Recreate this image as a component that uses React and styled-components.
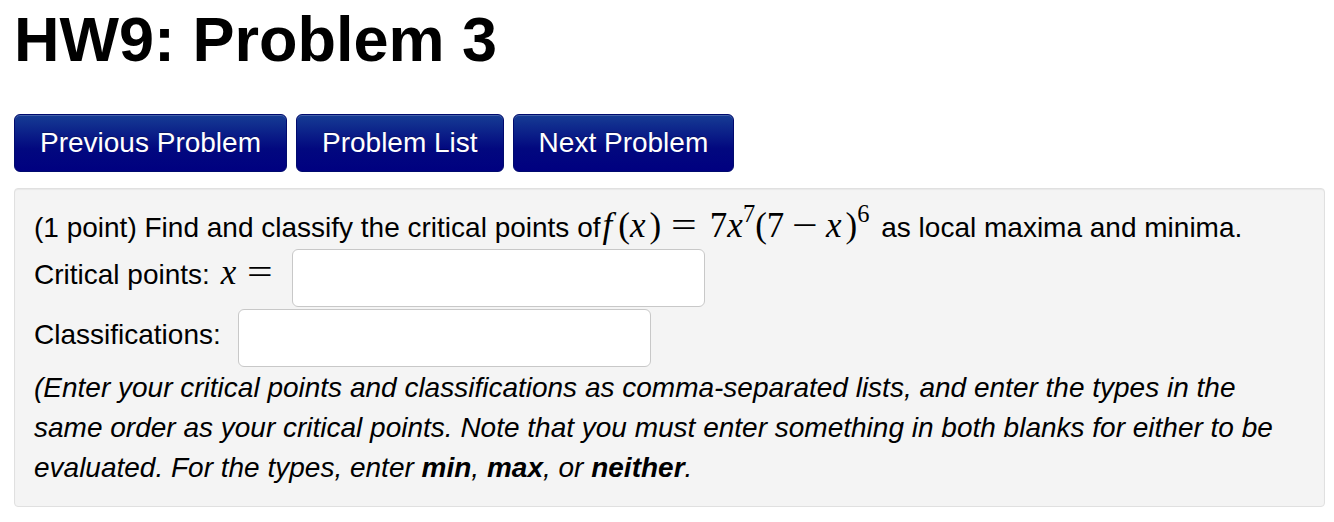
import React from "react";
import styled, { createGlobalStyle } from "styled-components";

const GlobalStyle = createGlobalStyle`
  body {
    margin: 0;
    background: #fff;
    color: #000;
    font-family: "Liberation Sans", Arial, Helvetica, sans-serif;
  }
`;

const Page = styled.div`
  padding: 4px 9px 0 14px;
`;

const Title = styled.h1`
  margin: 0;
  font-size: 63px;
  line-height: 70px;
  font-weight: bold;
`;

const ButtonBar = styled.div`
  display: flex;
  gap: 9px;
  margin-top: 40px;
`;

const NavButton = styled.button`
  height: 58px;
  padding: 0 25px;
  border: 1px solid #000a6e;
  border-radius: 6px;
  background: linear-gradient(#163c94, #02087f 60%, #000080);
  box-shadow: inset 0 1px 0 rgba(255, 255, 255, 0.2);
  color: #fff;
  font-family: inherit;
  font-size: 28px;
  text-shadow: 0 -1px 0 rgba(0, 0, 0, 0.25);
  cursor: pointer;
`;

const Panel = styled.div`
  margin-top: 16px;
  padding: 19px 19px 18px;
  background: #f4f4f4;
  border: 1px solid #e0e0e0;
  border-radius: 4px;
  box-shadow: inset 0 1px 1px rgba(0, 0, 0, 0.05);
  font-size: 28px;
  line-height: 40px;
`;

const Line = styled.div`
  white-space: nowrap;
`;

const FieldRow = styled.div`
  display: flex;
  align-items: center;
  height: 60px;
`;

const Label = styled.span`
  white-space: pre;
  margin-bottom: 6px;
`;

const AnswerInput = styled.input`
  box-sizing: border-box;
  width: 413px;
  height: 58px;
  margin-left: ${(p) => p.$gap}px;
  padding: 4px 10px;
  border: 1px solid #c8c8c8;
  border-radius: 6px;
  background: #fff;
  font-size: 28px;
  font-family: inherit;
  outline: none;
`;

const Note = styled.div`
  font-style: italic;
`;

const Math = styled.span`
  font-family: "Liberation Serif", "Times New Roman", serif;
  font-size: 35px;
  line-height: 1;
  white-space: nowrap;
  margin: 0 ${(p) => p.$right || 0}px 0 ${(p) => p.$left || 0}px;
`;

const Mi = styled.span`
  font-style: italic;
  margin-right: ${(p) => p.$mr || 0}px;
`;

const Mo = styled.span`
  display: inline-block;
  margin: 0 ${(p) => p.$r}px 0 ${(p) => p.$l}px;
  transform: scaleX(1.3);
`;

const Sup = styled.span`
  font-size: 70%;
  line-height: 0;
  vertical-align: 0.62em;
`;

export default function App() {
  return (
    <>
      <GlobalStyle />
      <Page>
        <Title>HW9: Problem 3</Title>
        <ButtonBar>
          <NavButton>Previous Problem</NavButton>
          <NavButton>Problem List</NavButton>
          <NavButton>Next Problem</NavButton>
        </ButtonBar>
        <Panel>
          <Line>
            (1 point) Find and classify the critical points of
            <Math $left={2} $right={4}>
              <Mi $mr={6}>f</Mi>(<Mi $mr={4}>x</Mi>)
              <Mo $l={13} $r={16}>=</Mo>7<Mi>x</Mi>
              <Sup>7</Sup>(7<Mo $l={11} $r={11}>−</Mo>
              <Mi $mr={4}>x</Mi>)<Sup>6</Sup>
            </Math>{" "}
            as local maxima and minima.
          </Line>
          <FieldRow>
            <Label>
              Critical points:{" "}
              <Math $left={3}>
                <Mi>x</Mi>
                <Mo $l={14} $r={3}>=</Mo>
              </Math>
            </Label>
            <AnswerInput $gap={19} />
          </FieldRow>
          <FieldRow>
            <Label>Classifications:</Label>
            <AnswerInput $gap={17} />
          </FieldRow>
          <Note>
            (Enter your critical points and classifications as comma-separated
            lists, and enter the types in the same order as your critical
            points. Note that you must enter something in both blanks for
            either to be evaluated. For the types, enter <b>min</b>,{" "}
            <b>max</b>, or <b>neither</b>.
          </Note>
        </Panel>
      </Page>
    </>
  );
}
